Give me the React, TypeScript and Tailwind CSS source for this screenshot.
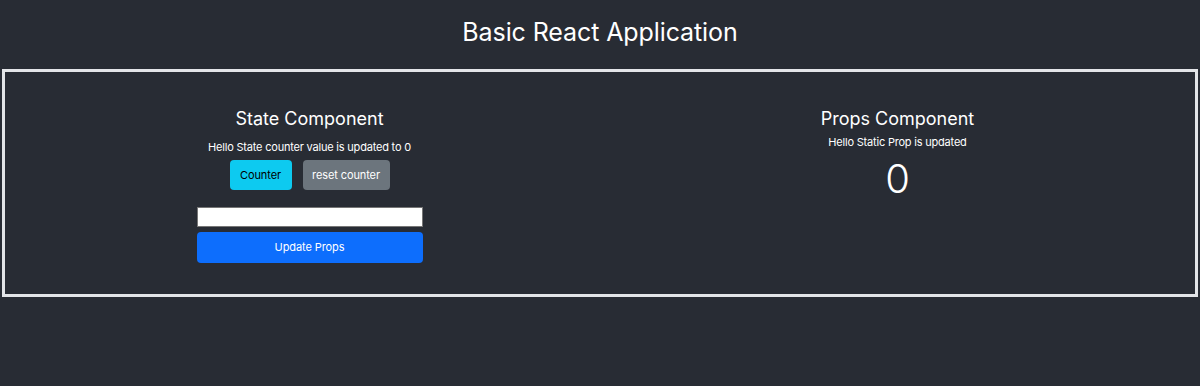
export default function App() {
  return (
    <div className="min-h-screen bg-[#282c34] text-white" style={{ fontFamily: 'Inter, "Noto Sans", sans-serif' }}>
      {/* Header */}
      <header className="h-[69px] flex items-center justify-center pb-[3px]">
        <h1 className="text-[25px] font-normal tracking-[-0.1px]">Basic React Application</h1>
      </header>

      {/* Main panel */}
      <div className="mx-[2px] border-[3px] border-[#e3e5e8] h-[228px] grid grid-cols-2">
        {/* State component */}
        <div className="flex flex-col items-center pt-[35px] pl-[14px]">
          <h2 className="text-[18px] leading-[24px]">State Component</h2>
          <p className="text-[11px] tracking-[-0.2px] mt-[9px] leading-[14px]">Hello State counter value is updated to 0</p>
          <div className="flex gap-[11px] mt-[6px]">
            <button className="h-[30px] w-[62px] rounded-[4px] bg-[#0dcaf0] text-black text-[11px] tracking-[-0.1px]">Counter</button>
            <button className="h-[30px] w-[87px] rounded-[4px] bg-[#6c757d] text-white text-[11px] tracking-[-0.1px]">reset counter</button>
          </div>
          <div className="w-[226px] mt-[17px] flex flex-col gap-[5px]">
            <input className="h-[20px] w-full bg-white border border-[#767676] text-black" />
            <button className="h-[31px] w-full rounded-[4px] bg-[#0d6efd] text-white text-[11px] tracking-[-0.1px]">Update Props</button>
          </div>
        </div>

        {/* Props component */}
        <div className="flex flex-col items-center pt-[35px]">
          <h2 className="text-[18px] leading-[24px]">Props Component</h2>
          <p className="text-[11px] tracking-[-0.2px] mt-[4px] leading-[14px]">Hello Static Prop is updated</p>
          <div className="text-[40px] leading-[48px] mt-[6px] font-light">0</div>
        </div>
      </div>
    </div>
  );
}
